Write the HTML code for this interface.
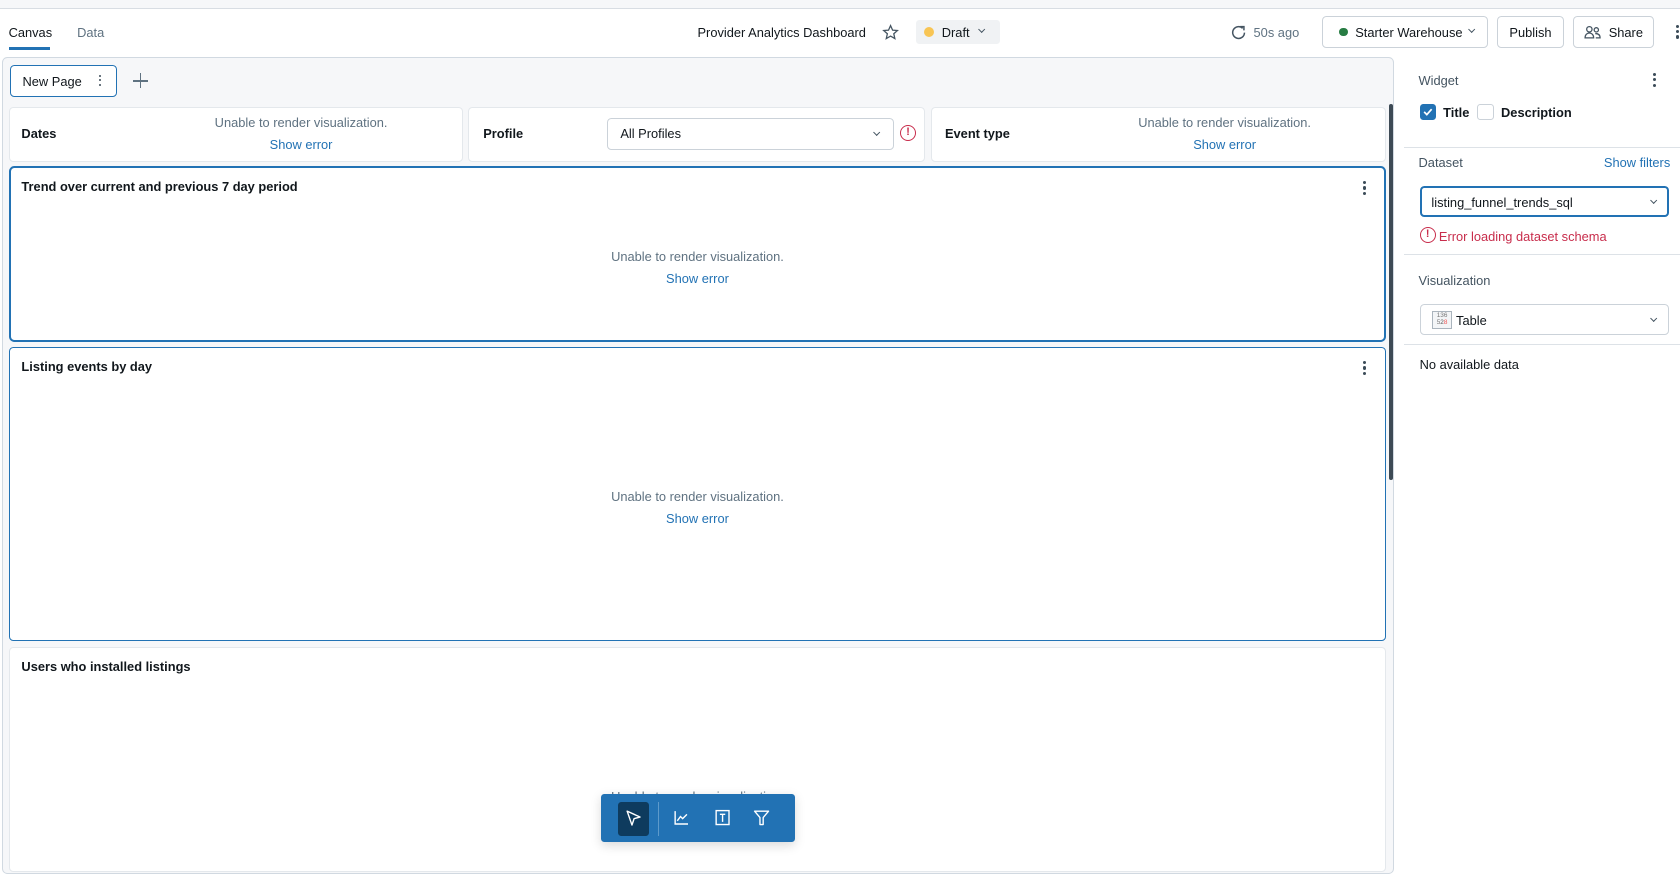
<!DOCTYPE html>
<html><head><meta charset="utf-8">
<style>
html{zoom:1.0714}
*{box-sizing:border-box;margin:0;padding:0}
body{width:1568px;height:821px;overflow:hidden;background:#fff;font-family:"Liberation Sans",sans-serif;font-size:12px;color:#11171c;position:relative}
.a{position:absolute}
.top{left:0;top:0;width:1568px;height:8px;background:#f6f7f9;border-bottom:1px solid #d8dde3}
.btn{position:absolute;top:15px;height:30px;border:1px solid #cbd2d9;border-radius:4px;display:flex;align-items:center;justify-content:center;font-size:12px;background:#fff}
.canvas{left:2px;top:53px;width:1299px;height:763px;background:#f6f7f9;border:1px solid #d1d9e1;border-radius:5px}
.card{position:absolute;background:#fff;border:1px solid #e4e8ec;border-radius:4px}
.ttl{position:absolute;left:12px;font-weight:bold;font-size:12px}
.err{position:absolute;text-align:center;color:#5f7281;font-size:12px;line-height:20px}
.err span{color:#2272b4}
.kb{position:absolute;width:3px}
.kb i{display:block;width:3px;height:3px;border-radius:50%;background:#3b4b58;margin-bottom:2px}
.lbl{position:absolute;left:1324px;color:#445461;font-size:12px}
.hr{position:absolute;left:1310px;width:258px;height:1px;background:#dde2e7}
.sel{position:absolute;left:1325px;width:233px;height:29px;border:1px solid #cbd2d9;border-radius:4px;background:#fff}
.chev{position:absolute;width:6px;height:6px;border-right:1.3px solid #445461;border-bottom:1.3px solid #445461;transform:rotate(45deg)}
</style></head><body>
<div class="a top"></div>

<div class="a" style="left:8px;top:23px">Canvas</div>
<div class="a" style="left:8px;top:44px;width:39px;height:3px;background:#2272b4"></div>
<div class="a" style="left:72px;top:23px;color:#5f7281">Data</div>
<div class="a" style="left:651px;top:23px">Provider Analytics Dashboard</div>
<svg class="a" style="left:823px;top:22px" width="16" height="16" viewBox="0 0 16 16"><path d="M8 1.5l1.9 4.2 4.5.4-3.4 3 1 4.5L8 11.3l-4 2.3 1-4.5-3.4-3 4.5-.4z" fill="none" stroke="#445461" stroke-width="1.2"/></svg>
<div class="a" style="left:855px;top:19px;width:78px;height:22px;background:#f0f2f4;border-radius:3px"></div>
<div class="a" style="left:862px;top:25px;width:10px;height:10px;border-radius:50%;background:#f8c554"></div>
<div class="a" style="left:879px;top:23px">Draft</div>
<div class="chev" style="left:914px;top:25px;width:5px;height:5px"></div>
<svg class="a" style="left:1148px;top:22px" width="16" height="16" viewBox="0 0 16 16"><path d="M13.5 8A5.5 5.5 0 1 1 11.8 4" fill="none" stroke="#445461" stroke-width="1.4"/><path d="M9.5 2.5h3.5v3.5" fill="none" stroke="#445461" stroke-width="1.4"/></svg>
<div class="a" style="left:1170px;top:23px;color:#5f7281">50s ago</div>
<div class="btn" style="left:1234px;width:155px;justify-content:flex-start;padding-left:15px"><i style="display:inline-block;width:8px;height:8px;border-radius:50%;background:#277c43;margin-right:7px"></i>Starter Warehouse</div>
<div class="chev" style="left:1371px;top:25px;width:5px;height:5px"></div>
<div class="btn" style="left:1397px;width:63px">Publish</div>
<div class="btn" style="left:1468px;width:76px"><svg width="16" height="14" viewBox="0 0 16 14" style="margin-right:7px"><circle cx="5" cy="4" r="2.5" fill="none" stroke="#445461" stroke-width="1.2"/><path d="M1 12c0-3 2-4.5 4-4.5s4 1.5 4 4.5z" fill="none" stroke="#445461" stroke-width="1.2"/><circle cx="11.5" cy="4.5" r="2" fill="none" stroke="#445461" stroke-width="1.2"/><path d="M10.5 8c2.5 0 4.5 1 4.5 4h-4" fill="none" stroke="#445461" stroke-width="1.2"/></svg>Share</div>
<div class="kb" style="left:1564px;top:23px"><i></i><i></i><i></i></div>

<div class="a canvas"></div>
<div class="a" style="left:9px;top:61px;width:100px;height:30px;border:1px solid #2272b4;border-radius:4px;background:#fff"></div>
<div class="a" style="left:21px;top:69px">New Page</div>
<div class="kb" style="left:92px;top:70px"><i style="width:2px;height:2px"></i><i style="width:2px;height:2px"></i><i style="width:2px;height:2px"></i></div>
<div class="a" style="left:124px;top:75px;width:14px;height:1.3px;background:#5f7281"></div>
<div class="a" style="left:130.5px;top:68px;width:1.3px;height:14px;background:#5f7281"></div>
<div class="a" style="left:1296px;top:97px;width:4px;height:351px;background:#3d4a55;border-radius:2px"></div>

<div class="card" style="left:8px;top:100px;width:424px;height:51px"></div>
<div class="ttl" style="left:20px;top:118px">Dates</div>
<div class="err" style="left:130px;top:105px;width:302px">Unable to render visualization.<br><span>Show error</span></div>

<div class="card" style="left:437px;top:100px;width:426px;height:51px"></div>
<div class="ttl" style="left:451px;top:118px">Profile</div>
<div class="a" style="left:567px;top:110px;width:267px;height:30px;border:1px solid #cbd2d9;border-radius:4px;background:#fff"></div>
<div class="a" style="left:579px;top:118px">All Profiles</div>
<div class="chev" style="left:816px;top:121px;width:5px;height:5px"></div>
<div class="a" style="left:840px;top:117px;width:15px;height:15px;border:1.4px solid #c82d4c;border-radius:50%;color:#c82d4c;font-size:10px;font-weight:bold;text-align:center;line-height:12px">!</div>

<div class="card" style="left:869px;top:100px;width:425px;height:51px"></div>
<div class="ttl" style="left:882px;top:118px">Event type</div>
<div class="err" style="left:992px;top:105px;width:302px">Unable to render visualization.<br><span>Show error</span></div>

<div class="card" style="left:8px;top:155px;width:1286px;height:164px;border:2px solid #2272b4;border-radius:5px"></div>
<div class="ttl" style="left:20px;top:167px">Trend over current and previous 7 day period</div>
<div class="kb" style="left:1272px;top:169px"><i></i><i></i><i></i></div>
<div class="err" style="left:8px;top:230px;width:1286px">Unable to render visualization.<br><span>Show error</span></div>

<div class="card" style="left:8px;top:324px;width:1286px;height:274px;border:1px solid #2272b4"></div>
<div class="ttl" style="left:20px;top:335px">Listing events by day</div>
<div class="kb" style="left:1272px;top:337px"><i></i><i></i><i></i></div>
<div class="err" style="left:8px;top:454px;width:1286px">Unable to render visualization.<br><span>Show error</span></div>

<div class="card" style="left:8px;top:604px;width:1286px;height:210px"></div>
<div class="ttl" style="left:20px;top:615px">Users who installed listings</div>
<div class="err" style="left:8px;top:734px;width:1286px">Unable to render visualization.</div>

<div class="a" style="left:561px;top:741px;width:181px;height:45px;background:#2272b4;border-radius:3px;box-shadow:0 3px 10px rgba(0,0,0,.15)"></div>
<div class="a" style="left:577px;top:749px;width:29px;height:31px;background:#0e3b5e;border-radius:3px"></div>
<svg class="a" style="left:583px;top:755px" width="16" height="18" viewBox="0 0 16 18"><path d="M2 2l12 5.5-5.5 1.5-2 6z" fill="none" stroke="#fff" stroke-width="1.3" stroke-linejoin="round"/></svg>
<div class="a" style="left:614px;top:749px;width:1px;height:31px;background:#5d9acb"></div>
<svg class="a" style="left:628px;top:755px" width="16" height="16" viewBox="0 0 16 16"><path d="M2 2v12h12" fill="none" stroke="#fff" stroke-width="1.3"/><path d="M4 11l3-4 2 2 4-4" fill="none" stroke="#fff" stroke-width="1.3"/></svg>
<svg class="a" style="left:666px;top:755px" width="16" height="16" viewBox="0 0 16 16"><rect x="2" y="1.5" width="12" height="13" fill="none" stroke="#fff" stroke-width="1.3"/><path d="M5.5 5h5M8 5v7" stroke="#fff" stroke-width="1.3"/></svg>
<svg class="a" style="left:703px;top:755px" width="16" height="16" viewBox="0 0 16 16"><path d="M1.5 2h13l-5 6v6.5h-3V8z" fill="none" stroke="#fff" stroke-width="1.3" stroke-linejoin="round"/></svg>

<div class="lbl" style="top:68px">Widget</div>
<div class="kb" style="left:1543px;top:68px"><i></i><i></i><i></i></div>
<div class="a" style="left:1325px;top:97px;width:15px;height:15px;background:#2272b4;border-radius:3px"></div>
<svg class="a" style="left:1327px;top:99px" width="11" height="11" viewBox="0 0 11 11"><path d="M2 5.5l2.5 2.5 4.5-5" fill="none" stroke="#fff" stroke-width="1.6"/></svg>
<div class="a" style="left:1347px;top:98px;font-weight:bold">Title</div>
<div class="a" style="left:1379px;top:97px;width:15px;height:15px;border:1px solid #cbd2d9;border-radius:3px"></div>
<div class="a" style="left:1401px;top:98px;font-weight:bold">Description</div>
<div class="hr" style="top:137px"></div>
<div class="lbl" style="top:145px">Dataset</div>
<div class="a" style="left:1497px;top:145px;color:#2272b4">Show filters</div>
<div class="sel" style="top:174px;border:2px solid #2272b4"></div>
<div class="a" style="left:1336px;top:182px">listing_funnel_trends_sql</div>
<div class="chev" style="left:1541px;top:185px;width:5px;height:5px"></div>
<div class="a" style="left:1325px;top:212px;width:15px;height:15px;border:1.4px solid #c82d4c;border-radius:50%;color:#c82d4c;font-size:10px;font-weight:bold;text-align:center;line-height:12px">!</div>
<div class="a" style="left:1343px;top:214px;color:#c82d4c">Error loading dataset schema</div>
<div class="hr" style="top:237px"></div>
<div class="lbl" style="top:255px">Visualization</div>
<div class="sel" style="top:284px"></div>
<div class="a" style="left:1337px;top:290px;width:18px;height:17px;border:1px solid #aab4bd;background:#f3f5f7;font-size:6px;line-height:7px;color:#777;text-align:center">136<br>5<span style="color:#555">2</span><span style="color:#e55">8</span></div>
<div class="a" style="left:1359px;top:292px">Table</div>
<div class="chev" style="left:1541px;top:295px;width:5px;height:5px"></div>
<div class="hr" style="top:321px"></div>
<div class="a" style="left:1325px;top:333px">No available data</div>
</body></html>
